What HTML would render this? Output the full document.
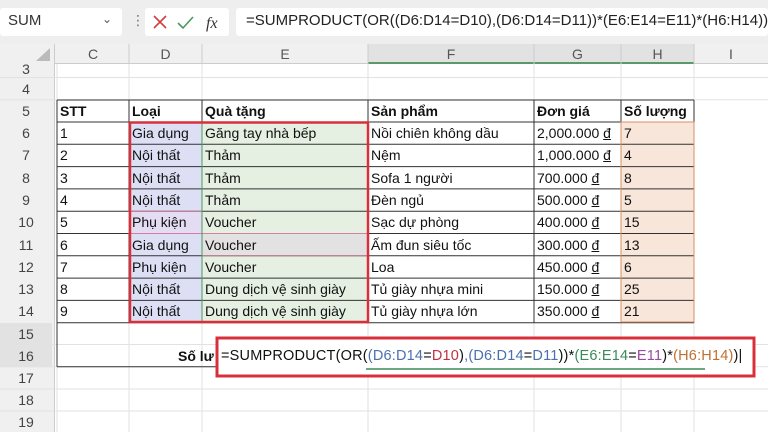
<!DOCTYPE html>
<html><head><meta charset="utf-8"><style>
*{margin:0;padding:0;box-sizing:border-box}
body{width:768px;height:432px;overflow:hidden;background:#fff;font-family:"Liberation Sans","DejaVu Sans",sans-serif;position:relative}
.a{position:absolute}
.t{position:absolute;font-size:14px;color:#111;white-space:nowrap;line-height:22px}
.rn{position:absolute;left:0;width:52px;text-align:center;font-size:14px;color:#444;line-height:22px}
.ch{position:absolute;top:44px;height:20px;text-align:center;font-size:14px;color:#555;line-height:20px}
u{text-decoration:underline}
</style></head><body>
<div class="a" style="left:0;top:0;width:768px;height:44px;background:#eeeeee"></div>
<div class="a" style="left:0;top:8px;width:122px;height:28px;background:#fff;border-radius:3px"></div>
<div class="t" style="left:8px;top:10px;font-size:15px;color:#333">SUM</div>
<div class="t" style="left:102px;top:8px;color:#555;font-size:12px">&#8964;</div>
<div class="t" style="left:131px;top:9px;color:#777">⋮</div>
<div class="a" style="left:145px;top:8px;width:84px;height:28px;background:#fff;border-radius:3px"></div>
<svg class="a" style="left:152px;top:14px" width="70" height="18"><path d="M2 2L14 14M14 2L2 14" stroke="#d04040" stroke-width="1.6" fill="none"/><path d="M26 9L31 14L41 3" stroke="#4a9a5a" stroke-width="1.6" fill="none"/><text x="54" y="14" font-family="Liberation Serif" font-style="italic" font-size="16" fill="#333">fx</text></svg>
<div class="a" style="left:236px;top:8px;width:532px;height:28px;background:#fff;border-radius:3px"></div>
<div class="t" style="left:246px;top:10px;font-size:15px;color:#222">=SUMPRODUCT(OR((D6:D14=D10),(D6:D14=D11))*(E6:E14=E11)*(H6:H14))</div>
<div class="a" style="left:0;top:44px;width:768px;height:20px;background:#f0f0f0;border-bottom:1px solid #ccc"></div>
<div class="a" style="left:0;top:44px;width:55px;height:388px;background:#f0f0f0;border-right:1px solid #ccc"></div>
<svg class="a" style="left:36px;top:48px" width="16" height="14"><path d="M14 0L14 13L0 13Z" fill="#bbb"/></svg>
<div class="ch" style="left:57px;width:72px">C</div>
<div class="ch" style="left:129px;width:73px">D</div>
<div class="ch" style="left:202px;width:166px">E</div>
<div class="ch" style="left:368px;width:166px;background:#e2e2e2;border-bottom:2px solid #5a9a6a">F</div>
<div class="ch" style="left:534px;width:87px;background:#e2e2e2;border-bottom:2px solid #5a9a6a">G</div>
<div class="ch" style="left:621px;width:73px;background:#e2e2e2;border-bottom:2px solid #5a9a6a">H</div>
<div class="ch" style="left:694px;width:74px">I</div>
<svg class="a" style="left:0;top:0" width="768" height="432">
<g stroke="#ccc" stroke-width="1">
<line x1="129" y1="44" x2="129" y2="64"/><line x1="202" y1="44" x2="202" y2="64"/><line x1="368" y1="44" x2="368" y2="64"/><line x1="534" y1="44" x2="534" y2="64"/><line x1="621" y1="44" x2="621" y2="64"/><line x1="694" y1="44" x2="694" y2="64"/>
</g>
<g stroke="#e2e2e2" stroke-width="1">
<line x1="129" y1="64" x2="129" y2="432"/><line x1="202" y1="64" x2="202" y2="432"/><line x1="368" y1="64" x2="368" y2="432"/><line x1="534" y1="64" x2="534" y2="432"/><line x1="621" y1="64" x2="621" y2="432"/><line x1="694" y1="64" x2="694" y2="432"/><line x1="57" y1="64" x2="57" y2="432"/>
<line x1="0" y1="77.5" x2="768" y2="77.5"/><line x1="0" y1="99.8" x2="768" y2="99.8"/><line x1="0" y1="344.5" x2="768" y2="344.5"/><line x1="0" y1="366.8" x2="768" y2="366.8"/><line x1="0" y1="389" x2="768" y2="389"/><line x1="0" y1="411" x2="768" y2="411"/>
</g>
<rect x="129" y="122" width="73" height="200" fill="#dde0f5"/>
<rect x="129" y="211" width="73" height="22" fill="#e4dcf2"/>
<rect x="202" y="122" width="166" height="200" fill="#e5efe2"/>
<rect x="202" y="233.5" width="166" height="22" fill="#e2e2e2"/>
<rect x="621" y="122" width="73" height="200" fill="#f8e6db"/>
<g stroke="#333" stroke-width="1">
<line x1="57" y1="100" x2="694" y2="100"/><line x1="57" y1="122" x2="694" y2="122"/>
<line x1="57" y1="144.3" x2="694" y2="144.3"/><line x1="57" y1="166.6" x2="694" y2="166.6"/><line x1="57" y1="188.9" x2="694" y2="188.9"/><line x1="57" y1="211.2" x2="694" y2="211.2"/><line x1="57" y1="233.5" x2="694" y2="233.5"/><line x1="57" y1="255.8" x2="694" y2="255.8"/><line x1="57" y1="278.1" x2="694" y2="278.1"/><line x1="57" y1="300.4" x2="694" y2="300.4"/><line x1="57" y1="322.7" x2="694" y2="322.7"/>
<line x1="57" y1="100" x2="57" y2="322.7"/><line x1="129" y1="100" x2="129" y2="322.7"/><line x1="202" y1="100" x2="202" y2="322.7"/><line x1="368" y1="100" x2="368" y2="322.7"/><line x1="534" y1="100" x2="534" y2="322.7"/><line x1="621" y1="100" x2="621" y2="322.7"/><line x1="694" y1="100" x2="694" y2="322.7"/>
<line x1="57" y1="322.7" x2="57" y2="366.8"/><line x1="57" y1="366.8" x2="220" y2="366.8"/>
</g>
<rect x="129" y="211.2" width="73" height="22.3" fill="none" stroke="#d080a0" stroke-width="1"/>
<rect x="202" y="233.5" width="166" height="22.3" fill="none" stroke="#d080a0" stroke-width="1"/>
<line x1="202" y1="122" x2="202" y2="322" stroke="#4a9a5a" stroke-width="1"/>
<rect x="130" y="122.5" width="238" height="199.5" fill="none" stroke="#d8303a" stroke-width="2.5"/>
<rect x="621" y="122" width="73" height="200" fill="none" stroke="#d89060" stroke-width="1"/>
<rect x="217" y="338" width="537" height="38" fill="#fff" stroke="#d8303a" stroke-width="3"/>
<line x1="366" y1="369" x2="705" y2="369" stroke="#3a8a5a" stroke-width="1.5"/>
</svg>
<div class="rn" style="top:58px">3</div>
<div class="rn" style="top:78px">4</div>
<div class="rn" style="top:100px">5</div>
<div class="rn" style="top:122px">6</div><div class="rn" style="top:144px">7</div><div class="rn" style="top:167px">8</div><div class="rn" style="top:189px">9</div><div class="rn" style="top:211px">10</div><div class="rn" style="top:234px">11</div><div class="rn" style="top:256px">12</div><div class="rn" style="top:278px">13</div><div class="rn" style="top:300px">14</div>
<div class="rn" style="top:323px;background:#e2e2e2">15</div><div class="rn" style="top:345px;background:#e2e2e2">16</div><div class="rn" style="top:367px">17</div><div class="rn" style="top:389px">18</div><div class="rn" style="top:411px">19</div>
<div class="t" style="left:60px;top:100px;font-weight:bold">STT</div>
<div class="t" style="left:132px;top:100px;font-weight:bold">Loại</div>
<div class="t" style="left:205px;top:100px;font-weight:bold">Quà tặng</div>
<div class="t" style="left:371px;top:100px;font-weight:bold">Sản phẩm</div>
<div class="t" style="left:537px;top:100px;font-weight:bold">Đơn giá</div>
<div class="t" style="left:624px;top:100px;font-weight:bold">Số lượng</div>
<div class="t" style="left:60px;top:122px">1</div><div class="t" style="left:132px;top:122px">Gia dụng</div><div class="t" style="left:205px;top:122px">Găng tay nhà bếp</div><div class="t" style="left:371px;top:122px">Nồi chiên không dầu</div><div class="t" style="left:537px;top:122px">2,000.000 <u>đ</u></div><div class="t" style="left:624px;top:122px">7</div>
<div class="t" style="left:60px;top:144px">2</div><div class="t" style="left:132px;top:144px">Nội thất</div><div class="t" style="left:205px;top:144px">Thảm</div><div class="t" style="left:371px;top:144px">Nệm</div><div class="t" style="left:537px;top:144px">1,000.000 <u>đ</u></div><div class="t" style="left:624px;top:144px">4</div>
<div class="t" style="left:60px;top:167px">3</div><div class="t" style="left:132px;top:167px">Nội thất</div><div class="t" style="left:205px;top:167px">Thảm</div><div class="t" style="left:371px;top:167px">Sofa 1 người</div><div class="t" style="left:537px;top:167px">700.000 <u>đ</u></div><div class="t" style="left:624px;top:167px">8</div>
<div class="t" style="left:60px;top:189px">4</div><div class="t" style="left:132px;top:189px">Nội thất</div><div class="t" style="left:205px;top:189px">Thảm</div><div class="t" style="left:371px;top:189px">Đèn ngủ</div><div class="t" style="left:537px;top:189px">500.000 <u>đ</u></div><div class="t" style="left:624px;top:189px">5</div>
<div class="t" style="left:60px;top:211px">5</div><div class="t" style="left:132px;top:211px">Phụ kiện</div><div class="t" style="left:205px;top:211px">Voucher</div><div class="t" style="left:371px;top:211px">Sạc dự phòng</div><div class="t" style="left:537px;top:211px">400.000 <u>đ</u></div><div class="t" style="left:624px;top:211px">15</div>
<div class="t" style="left:60px;top:234px">6</div><div class="t" style="left:132px;top:234px">Gia dụng</div><div class="t" style="left:205px;top:234px">Voucher</div><div class="t" style="left:371px;top:234px">Ấm đun siêu tốc</div><div class="t" style="left:537px;top:234px">300.000 <u>đ</u></div><div class="t" style="left:624px;top:234px">13</div>
<div class="t" style="left:60px;top:256px">7</div><div class="t" style="left:132px;top:256px">Phụ kiện</div><div class="t" style="left:205px;top:256px">Voucher</div><div class="t" style="left:371px;top:256px">Loa</div><div class="t" style="left:537px;top:256px">450.000 <u>đ</u></div><div class="t" style="left:624px;top:256px">6</div>
<div class="t" style="left:60px;top:278px">8</div><div class="t" style="left:132px;top:278px">Nội thất</div><div class="t" style="left:205px;top:278px">Dung dịch vệ sinh giày</div><div class="t" style="left:371px;top:278px">Tủ giày nhựa mini</div><div class="t" style="left:537px;top:278px">150.000 <u>đ</u></div><div class="t" style="left:624px;top:278px">25</div>
<div class="t" style="left:60px;top:300px">9</div><div class="t" style="left:132px;top:300px">Nội thất</div><div class="t" style="left:205px;top:300px">Dung dịch vệ sinh giày</div><div class="t" style="left:371px;top:300px">Tủ giày nhựa lớn</div><div class="t" style="left:537px;top:300px">350.000 <u>đ</u></div><div class="t" style="left:624px;top:300px">21</div>
<div class="t" style="left:178px;top:345px;font-weight:bold">Số lư</div>
<div class="t" style="left:221px;top:345px;font-size:14.5px;letter-spacing:0.2px">=SUMPRODUCT(OR(<span style="color:#4a70b0">(D6:D14</span>=<span style="color:#c03040">D10</span>)<span style="color:#4a70b0">,(D6:D14</span>=<span style="color:#4a70b0">D11</span>))*<span style="color:#3a8a5a">(E6:E14</span>=<span style="color:#9a4aa0">E11</span>)*<span style="color:#c07030">(H6:H14)</span>)|</div>
</body></html>
